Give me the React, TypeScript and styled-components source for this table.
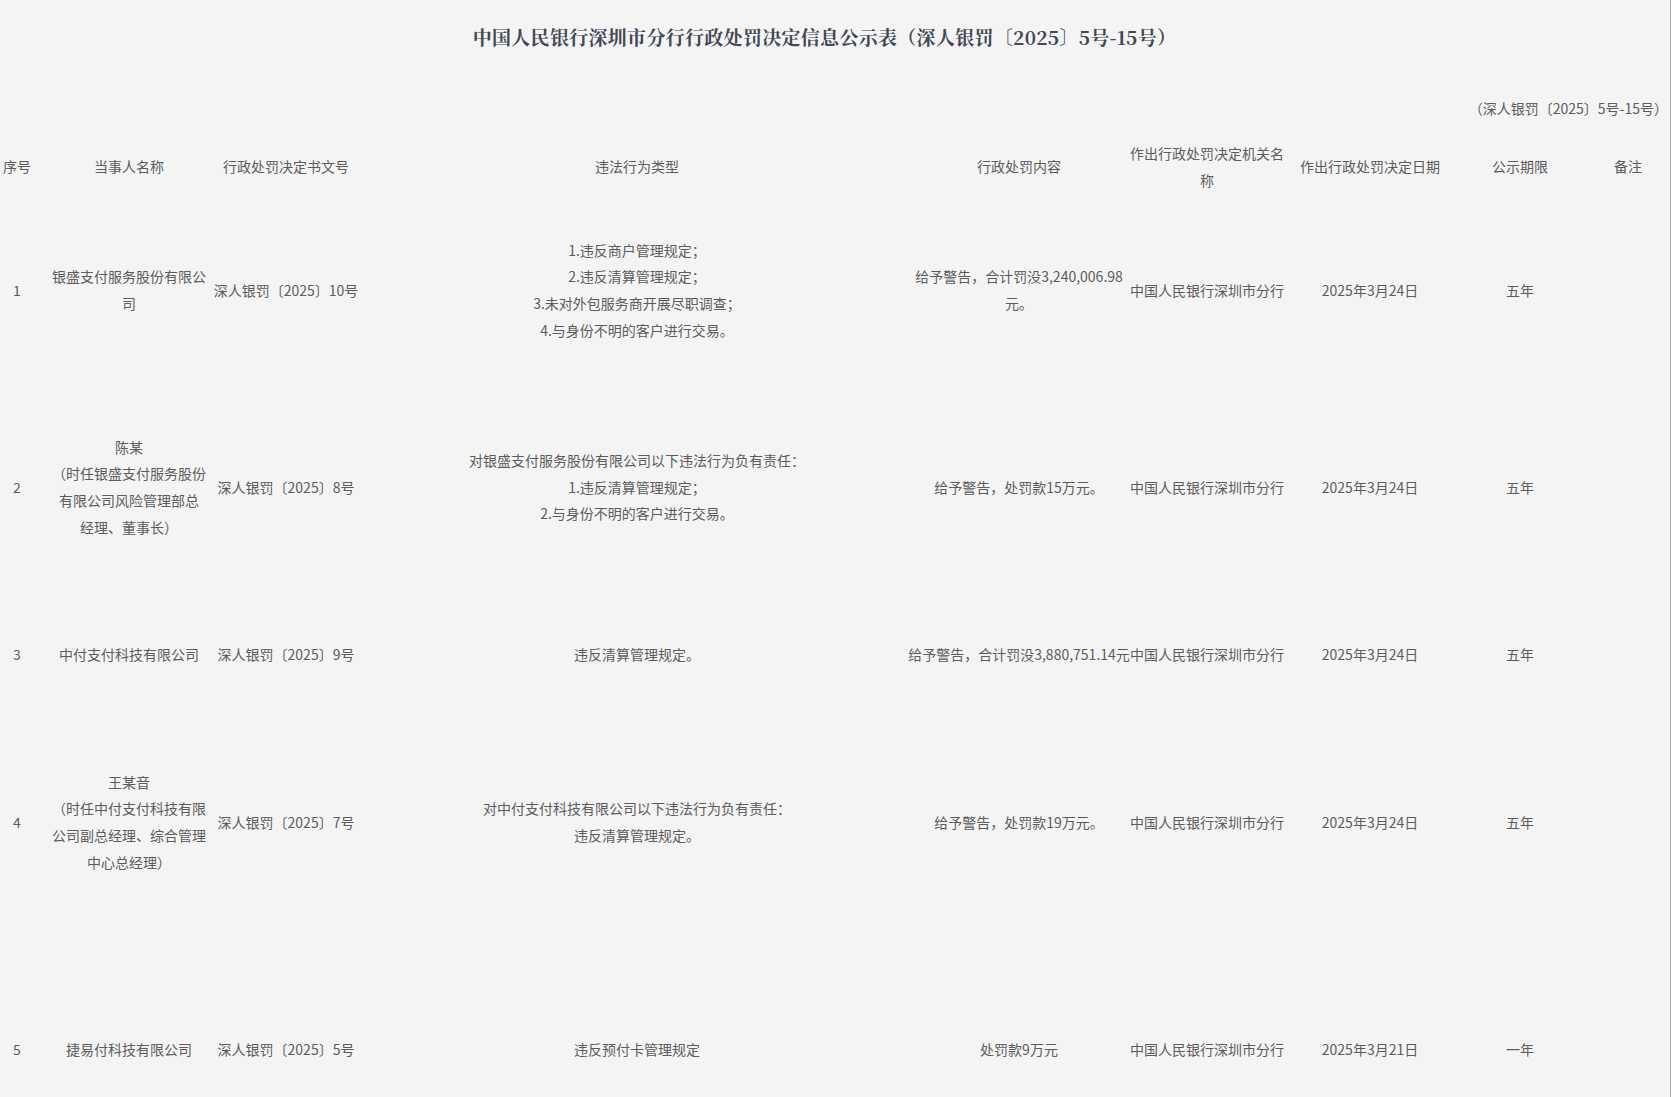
import React from "react";
import styled, { createGlobalStyle } from "styled-components";

const GlobalStyle = createGlobalStyle`
  html, body {
    margin: 0;
    padding: 0;
    background: #f4f4f4;
    overflow: hidden;
  }
  body {
    font-family: "Noto Sans CJK SC", "Noto Sans", sans-serif;
    color: #5c5c5c;
  }
`;

const COLS = "34px 190px 124px 578px 186px 190px 136px 164px 52px";

const Page = styled.div`
  box-sizing: border-box;
  width: 1671px;
  height: 100vh;
  overflow: hidden;
  padding-top: 22px;
  border-right: 1px solid #a9a9a9;
`;

const Title = styled.h1`
  margin: 0;
  padding-right: 21px;
  font-family: "Noto Serif CJK SC", "Noto Sans CJK SC", serif;
  font-size: 19px;
  font-weight: 700;
  line-height: 30px;
  text-align: center;
  color: #404854;
  letter-spacing: 0.3px;
`;

const DocRange = styled.div`
  margin-top: 43px;
  padding-right: 2px;
  font-size: 14px;
  line-height: 26px;
  text-align: right;
`;

const Table = styled.div`
  margin-top: 16px;
  display: flex;
  flex-direction: column;
`;

const Row = styled.div<{ $h: number }>`
  display: grid;
  grid-template-columns: ${COLS};
  flex: none;
  height: ${(p) => p.$h}px;
`;

const Cell = styled.div`
  display: flex;
  flex-direction: column;
  align-items: center;
  justify-content: center;
  min-width: 0;
  font-size: 14px;
  line-height: 26.6px;
  text-align: center;
  white-space: nowrap;
`;

const HeadCell = styled(Cell)`
  line-height: 27.5px;
`;

type Rec = {
  no: string;
  name: string[];
  doc: string;
  violation: string[];
  penalty: string[];
  org: string;
  date: string;
  period: string;
  note: string;
  h: number;
};

const rows: Rec[] = [
  {
    no: "1",
    name: ["银盛支付服务股份有限公", "司"],
    doc: "深人银罚〔2025〕10号",
    violation: [
      "1.违反商户管理规定；",
      "2.违反清算管理规定；",
      "3.未对外包服务商开展尽职调查；",
      "4.与身份不明的客户进行交易。",
    ],
    penalty: ["给予警告，合计罚没3,240,006.98", "元。"],
    org: "中国人民银行深圳市分行",
    date: "2025年3月24日",
    period: "五年",
    note: "",
    h: 186,
  },
  {
    no: "2",
    name: ["陈某", "（时任银盛支付服务股份", "有限公司风险管理部总", "经理、董事长）"],
    doc: "深人银罚〔2025〕8号",
    violation: [
      "对银盛支付服务股份有限公司以下违法行为负有责任：",
      "1.违反清算管理规定；",
      "2.与身份不明的客户进行交易。",
    ],
    penalty: ["给予警告，处罚款15万元。"],
    org: "中国人民银行深圳市分行",
    date: "2025年3月24日",
    period: "五年",
    note: "",
    h: 208,
  },
  {
    no: "3",
    name: ["中付支付科技有限公司"],
    doc: "深人银罚〔2025〕9号",
    violation: ["违反清算管理规定。"],
    penalty: ["给予警告，合计罚没3,880,751.14元"],
    org: "中国人民银行深圳市分行",
    date: "2025年3月24日",
    period: "五年",
    note: "",
    h: 126,
  },
  {
    no: "4",
    name: ["王某音", "（时任中付支付科技有限", "公司副总经理、综合管理", "中心总经理）"],
    doc: "深人银罚〔2025〕7号",
    violation: ["对中付支付科技有限公司以下违法行为负有责任：", "违反清算管理规定。"],
    penalty: ["给予警告，处罚款19万元。"],
    org: "中国人民银行深圳市分行",
    date: "2025年3月24日",
    period: "五年",
    note: "",
    h: 210,
  },
  {
    no: "5",
    name: ["捷易付科技有限公司"],
    doc: "深人银罚〔2025〕5号",
    violation: ["违反预付卡管理规定"],
    penalty: ["处罚款9万元"],
    org: "中国人民银行深圳市分行",
    date: "2025年3月21日",
    period: "一年",
    note: "",
    h: 244,
  },
];

const Lines: React.FC<{ lines: string[] }> = ({ lines }) => (
  <span>
    {lines.map((l, i) => (
      <React.Fragment key={i}>
        {i > 0 && <br />}
        {l}
      </React.Fragment>
    ))}
  </span>
);

export default function App() {
  return (
    <Page>
      <GlobalStyle />
      <Title>中国人民银行深圳市分行行政处罚决定信息公示表（深人银罚〔2025〕5号-15号）</Title>
      <DocRange>（深人银罚〔2025〕5号-15号）</DocRange>
      <Table>
        <Row $h={60}>
          <HeadCell>序号</HeadCell>
          <HeadCell>当事人名称</HeadCell>
          <HeadCell>行政处罚决定书文号</HeadCell>
          <HeadCell>违法行为类型</HeadCell>
          <HeadCell>行政处罚内容</HeadCell>
          <HeadCell>
            <Lines lines={["作出行政处罚决定机关名", "称"]} />
          </HeadCell>
          <HeadCell>作出行政处罚决定日期</HeadCell>
          <HeadCell>公示期限</HeadCell>
          <HeadCell>备注</HeadCell>
        </Row>
        {rows.map((r) => (
          <Row key={r.no} $h={r.h}>
            <Cell>{r.no}</Cell>
            <Cell>
              <Lines lines={r.name} />
            </Cell>
            <Cell>{r.doc}</Cell>
            <Cell>
              <Lines lines={r.violation} />
            </Cell>
            <Cell>
              <Lines lines={r.penalty} />
            </Cell>
            <Cell>{r.org}</Cell>
            <Cell>{r.date}</Cell>
            <Cell>{r.period}</Cell>
            <Cell>{r.note}</Cell>
          </Row>
        ))}
      </Table>
    </Page>
  );
}
